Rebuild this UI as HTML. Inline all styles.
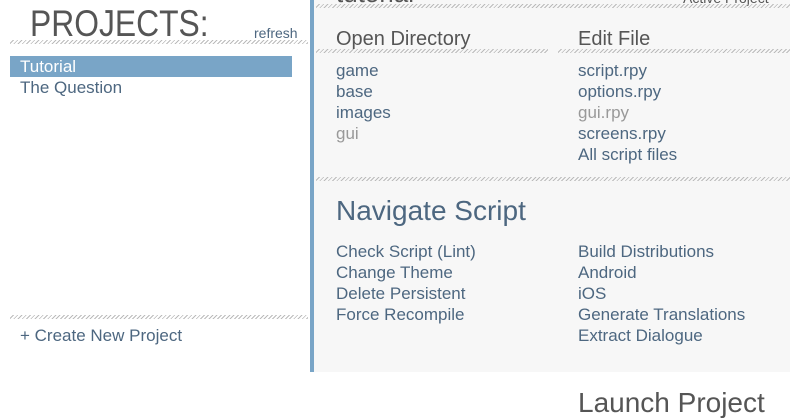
<!DOCTYPE html>
<html><head><meta charset="utf-8"><style>
html,body{margin:0;padding:0}
body{width:800px;height:400px;position:relative;overflow:hidden;background:#fff;font-family:"Liberation Sans",sans-serif;}
.a{position:absolute;white-space:nowrap}
.h{position:absolute;height:4px;background:repeating-linear-gradient(135deg,transparent 0 2px,#bbb 2px 3px);}
.l{color:#4d6780;font-size:17px;line-height:21px}
.g{color:#999}
.hd{color:#555;font-size:20px}
</style></head><body>
<div class="a" style="left:30px;top:3px;font-size:37px;color:#555;transform:scaleX(0.86);transform-origin:left top">PROJECTS:</div>
<div class="a" style="left:254px;top:25px;font-size:14px;color:#4d6780">refresh</div>
<div class="h" style="left:10px;top:40px;width:298px"></div>
<div class="a" style="left:10px;top:56px;width:282px;height:21px;background:#79a5c7"></div>
<div class="a l" style="left:20px;top:56px;color:#fff">Tutorial</div>
<div class="a l" style="left:20px;top:77px">The Question</div>
<div class="h" style="left:10px;top:315px;width:298px"></div>
<div class="a l" style="left:20px;top:325px">+ Create New Project</div>

<div class="a" style="left:310px;top:0;width:480px;height:372px;background:#f7f7f7;border-left:4px solid #79a5c7;box-sizing:border-box"></div>
<div class="a" style="left:336px;top:-22px;font-size:26px;color:#555">tutorial</div>
<div class="a" style="left:683px;top:-10px;font-size:14px;color:#555">Active Project</div>
<div class="h" style="left:316px;top:4px;width:474px"></div>
<div class="a hd" style="left:336px;top:28px">Open Directory</div>
<div class="a hd" style="left:578px;top:28px">Edit File</div>
<div class="h" style="left:316px;top:49px;width:232px"></div>
<div class="h" style="left:558px;top:49px;width:232px"></div>
<div class="a l" style="left:336px;top:60px">game<br>base<br>images<br><span class="g">gui</span></div>
<div class="a l" style="left:578px;top:60px">script.rpy<br>options.rpy<br><span class="g">gui.rpy</span><br>screens.rpy<br>All script files</div>
<div class="h" style="left:316px;top:177px;width:474px"></div>
<div class="a" style="left:336px;top:195px;font-size:28px;color:#4d6780">Navigate Script</div>
<div class="a l" style="left:336px;top:241px">Check Script (Lint)<br>Change Theme<br>Delete Persistent<br>Force Recompile</div>
<div class="a l" style="left:578px;top:241px">Build Distributions<br>Android<br>iOS<br>Generate Translations<br>Extract Dialogue</div>
<div class="a" style="left:578px;top:387px;font-size:28px;color:#555">Launch Project</div>
</body></html>
